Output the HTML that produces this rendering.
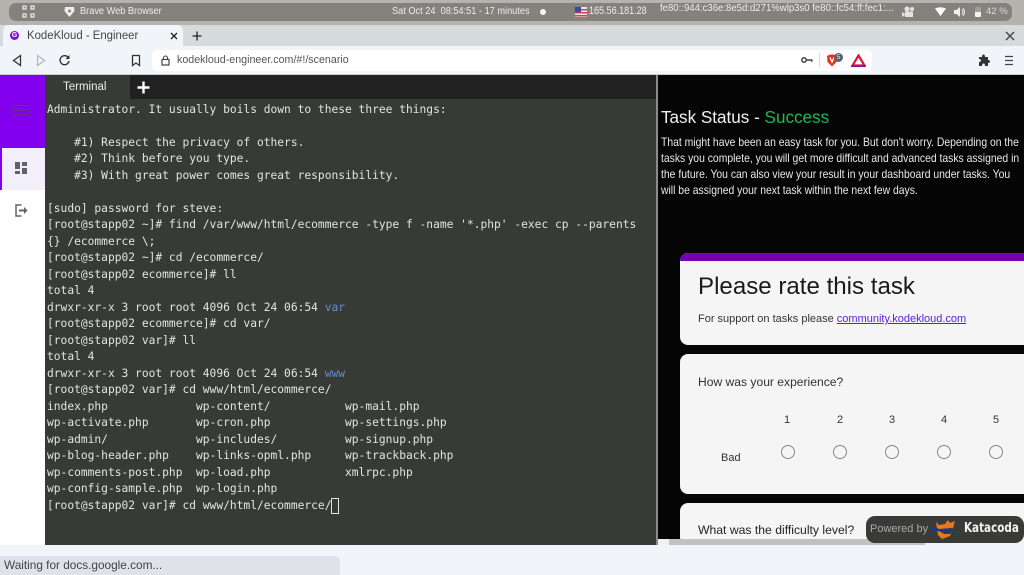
<!DOCTYPE html>
<html><head><meta charset="utf-8"><style>
html,body{margin:0;padding:0;width:1024px;height:575px;overflow:hidden;background:#f1f5f9;font-family:"Liberation Sans",sans-serif}
.a{position:absolute;white-space:pre}
#t{position:absolute;left:47px;top:101.5px;font:11.25px/16.5px "DejaVu Sans Mono",monospace;color:#e4e4df;white-space:pre}
#t b{font-weight:normal;color:#5f8fd0}
.card{position:absolute;left:680px;width:344px;background:#f5f5f5;border-radius:8px 0 0 8px}
.n{position:absolute;top:414px;font-size:11px;color:#333;width:20px;text-align:center}
.r{position:absolute;top:445px;width:12px;height:12px;border:1.5px solid #888;border-radius:50%}
.top{color:#eee;font-size:10px;transform-origin:0 0;transform:scaleX(.92)}
.rb{font-family:"Liberation Sans",sans-serif;color:#e8e8e8;font-size:11.8px;line-height:16px;transform-origin:0 0;transform:scaleX(.88)}
</style></head><body>
<!-- top bar -->
<div class="a" style="left:0;top:0;width:1024px;height:25px;background:#b5b3ae"></div>
<div class="a" style="left:9px;top:3px;width:1003px;height:18px;background:#85827e;border-radius:7px"></div>
<svg class="a" style="left:22px;top:5px" width="14" height="13"><g fill="none" stroke="#eee" stroke-width="1.2"><rect x="1" y="1" width="3" height="3"/><rect x="9" y="1" width="3" height="3"/><rect x="1" y="9" width="3" height="3"/><rect x="9" y="9" width="3" height="3"/></g></svg>
<svg class="a" style="left:64px;top:6px" width="11" height="12"><path d="M1 1h9l.5 4L5.500 11 .5 5z" fill="#eee"/><circle cx="5.500" cy="5" r="1.500" fill="#85827e"/></svg>
<div class="a top" style="left:80px;top:6px">Brave Web Browser</div>
<div class="a top" style="left:392px;top:6px">Sat Oct 24  08:54:51 - 17 minutes</div>
<div class="a" style="left:540px;top:9px;width:6px;height:6px;background:#f4f4f4;border-radius:50%"></div>
<svg class="a" style="left:575px;top:7px" width="12" height="10"><rect width="12" height="10" fill="#e8e8ee"/><rect y="2" width="12" height="1.500" fill="#d04050"/><rect y="5" width="12" height="1.500" fill="#d04050"/><rect y="8" width="12" height="1.500" fill="#d04050"/><rect width="6" height="5" fill="#3a4a9a"/></svg>
<div class="a top" style="left:589px;top:5px;font-size:11px;transform:scaleX(.82)">165.56.181.28</div>
<div class="a top" style="left:660px;top:3px;font-size:10.300px;transform:scaleX(.93)">fe80::944:c36e:8e5d:d271%wlp3s0 fe80::fc54:ff:fec1:...</div>
<svg class="a" style="left:902px;top:6px" width="13" height="12"><circle cx="5" cy="3" r="2.500" fill="#e4e4e4"/><circle cx="10" cy="3" r="2" fill="#e4e4e4"/><rect x="3" y="5.500" width="8" height="5.500" fill="#e4e4e4"/><path d="M0 6l3 2v1l-3 2z" fill="#e4e4e4"/></svg>
<svg class="a" style="left:935px;top:7px" width="11" height="10"><path d="M0 1.500Q5.500-1 11 1.500L5.500 9z" fill="#fff"/></svg>
<svg class="a" style="left:954px;top:6px" width="12" height="12"><path d="M0 4h2.500L6 1v10L2.500 8H0z" fill="#eee"/><path d="M8 3.500Q10 6 8 8.500M9 2Q12 6 9 10" stroke="#eee" stroke-width="1" fill="none"/></svg>
<div class="a" style="left:975px;top:7px;width:6px;height:10px;background:#f2f2f2;border-radius:1px"></div>
<div class="a" style="left:975px;top:7px;width:6px;height:5px;background:#a09e9a"></div>
<div class="a top" style="left:986px;top:6px;font-size:9.500px;color:#ddd;transform:none">42 %</div>
<!-- tab strip -->
<div class="a" style="left:0;top:25px;width:1024px;height:21px;background:#d5dadd"></div>
<div class="a" style="left:3px;top:25px;width:180px;height:21px;background:#f1f5f9;border-radius:6px 6px 0 0"></div>
<div class="a" style="left:10px;top:31px;width:9px;height:9px;border-radius:50%;background:#7a0fe0;color:#fff;font:bold 7px/9px 'Liberation Sans';text-align:center">G</div>
<div class="a" style="left:27px;top:27px;font-size:12.300px;color:#444;line-height:16px;transform-origin:0 0;transform:scaleX(.925)">KodeKloud - Engineer</div>
<svg class="a" style="left:170px;top:32px" width="8" height="8"><path d="M1 1l6 6M7 1L1 7" stroke="#222" stroke-width="1.300"/></svg>
<svg class="a" style="left:192px;top:31px" width="10" height="10"><path d="M5 .5v9M.5 5h9" stroke="#222" stroke-width="1.300"/></svg>
<svg class="a" style="left:1005px;top:31px" width="10" height="10"><path d="M1 1l8 8M9 1L1 9" stroke="#444" stroke-width="1.400"/></svg>
<!-- toolbar -->
<div class="a" style="left:0;top:46px;width:1024px;height:28px;background:#f1f5f9"></div>
<div class="a" style="left:0;top:74px;width:1024px;height:1px;background:#c8ccce"></div>
<svg class="a" style="left:12px;top:54px" width="10" height="13"><path d="M8.500 1.500v10L1.500 6.500z" fill="none" stroke="#333" stroke-width="1.300"/></svg>
<svg class="a" style="left:36px;top:54px" width="10" height="13"><path d="M1.500 1.500v10l7-5z" fill="none" stroke="#b5b9bc" stroke-width="1.300"/></svg>
<svg class="a" style="left:58px;top:54px" width="13" height="13"><path d="M10.500 4A4.500 4.500 0 1 0 11 7" fill="none" stroke="#333" stroke-width="1.400"/><path d="M11.500 1v4h-4z" fill="#333"/></svg>
<svg class="a" style="left:131px;top:54px" width="10" height="13"><path d="M1.500 1.500h7v10L5 9l-3.500 2.500z" fill="none" stroke="#333" stroke-width="1.300"/></svg>
<div class="a" style="left:152px;top:50px;width:208px;height:21px;background:#fff;border-radius:6px 0 0 6px"></div>
<div class="a" style="left:360px;top:50px;width:512px;height:21px;background:#fff;border-radius:0 6px 6px 0"></div>
<svg class="a" style="left:161px;top:55px" width="9" height="11"><rect x="1" y="4.500" width="7" height="5.500" fill="none" stroke="#444" stroke-width="1.200"/><path d="M2.500 4.500V3a2 2 0 0 1 4 0v1.500" fill="none" stroke="#444" stroke-width="1.100"/></svg>
<div class="a" style="left:177px;top:53px;font-size:10.700px;line-height:15px;color:#555">kodekloud-engineer.com/#!/scenario</div>
<svg class="a" style="left:801px;top:56px" width="12" height="9"><circle cx="3" cy="4" r="2.200" fill="none" stroke="#444" stroke-width="1.500"/><path d="M5 3.300h6.500v2.500H10V4.700H5z" fill="#444"/></svg>
<div class="a" style="left:819px;top:53px;width:1px;height:14px;background:#d4d8da"></div>
<svg class="a" style="left:826px;top:54px" width="12" height="13"><path d="M1 2l3-1.500h4L11 2l-.5 6L6 12.500 1.500 8z" fill="#e8331c"/><path d="M4 3.500L6 8l2-4.500" stroke="#fff" stroke-width="1.300" fill="none"/></svg>
<div class="a" style="left:834px;top:53px;width:9px;height:9px;background:#5c6068;border-radius:50%;color:#eee;font:6.500px/9px 'Liberation Sans';text-align:center">5</div>
<svg class="a" style="left:851px;top:54px" width="15" height="13"><path d="M7.500 1.500L13.500 11.500H1.500z" fill="none" stroke="#d8163c" stroke-width="2.200"/><path d="M0 11.500H15V13H0z" fill="#7a1a9a"/></svg>
<svg class="a" style="left:978px;top:54px" width="12" height="12"><path d="M1 3h3Q4 .5 5.500 .5T7 3h3v3Q12 6 12 7.500T10 9v3H7Q7 9.500 5.500 9.500T4 12H1V8Q3 8 3 6.500T1 5z" fill="#333"/></svg>
<svg class="a" style="left:1004px;top:55px" width="10" height="11"><path d="M1 1.500h8M1 5.500h8M1 9.500h8" stroke="#444" stroke-width="1.200"/></svg>
<!-- left sidebar -->
<div class="a" style="left:0;top:75px;width:45px;height:470px;background:#fff"></div>
<div class="a" style="left:0;top:75px;width:45px;height:73px;background:#8200ee"></div>
<svg class="a" style="left:11px;top:104px" width="19" height="14"><path d="M1 1.500h17M1 6h17M1 11h17" stroke="#5a3e6c" stroke-width="1.200"/></svg>
<div class="a" style="left:0;top:148px;width:2px;height:42px;background:#8200ee"></div>
<div class="a" style="left:2px;top:148px;width:43px;height:42px;background:#f2eefa"></div>
<svg class="a" style="left:15px;top:162px" width="12" height="12"><path d="M0 0h5v7H0zM7 0h5v4H7zM7 6h5v6H7zM0 9h5v3H0z" fill="#5f6368"/></svg>
<svg class="a" style="left:15px;top:204px" width="13" height="13"><path d="M6.500 1H1v11h5.500" fill="none" stroke="#5f6368" stroke-width="1.500"/><path d="M4 5.500h5V3l3.500 3.500L9 10V7.500H4z" fill="#5f6368"/></svg>
<!-- terminal -->
<div class="a" style="left:45px;top:75px;width:612px;height:470px;background:#383a35"></div>
<div class="a" style="left:45px;top:75px;width:612px;height:24px;background:#212121"></div>
<div class="a" style="left:45px;top:75px;width:85px;height:24px;background:#383a35"></div>
<div class="a" style="left:63px;top:80px;font-size:11.500px;line-height:15px;color:#eee">Terminal</div>
<svg class="a" style="left:137px;top:81px" width="13" height="13"><path d="M6.500 .5v12M.5 6.500h12" stroke="#fff" stroke-width="2.400"/></svg>
<div id="t">Administrator. It usually boils down to these three things:

    #1) Respect the privacy of others.
    #2) Think before you type.
    #3) With great power comes great responsibility.

[sudo] password for steve:
[root@stapp02 ~]# find /var/www/html/ecommerce -type f -name '*.php' -exec cp --parents
{} /ecommerce \;
[root@stapp02 ~]# cd /ecommerce/
[root@stapp02 ecommerce]# ll
total 4
drwxr-xr-x 3 root root 4096 Oct 24 06:54 <b>var</b>
[root@stapp02 ecommerce]# cd var/
[root@stapp02 var]# ll
total 4
drwxr-xr-x 3 root root 4096 Oct 24 06:54 <b>www</b>
[root@stapp02 var]# cd www/html/ecommerce/
index.php             wp-content/           wp-mail.php
wp-activate.php       wp-cron.php           wp-settings.php
wp-admin/             wp-includes/          wp-signup.php
wp-blog-header.php    wp-links-opml.php     wp-trackback.php
wp-comments-post.php  wp-load.php           xmlrpc.php
wp-config-sample.php  wp-login.php
[root@stapp02 var]# cd www/html/ecommerce/</div>
<div class="a" style="left:331px;top:498px;width:6px;height:14px;border:1px solid #e4e4df"></div>
<!-- right -->
<div class="a" style="left:656px;top:75px;width:2px;height:470px;background:#8a8c88"></div>
<div class="a" style="left:658px;top:75px;width:366px;height:470px;background:#050505"></div>
<div class="a" style="left:661px;top:108px;font-size:17.100px;line-height:20px;color:#f0f0f0">Task Status - <span style="color:#1db954">Success</span></div>
<div class="a rb" style="left:661px;top:134px">That might have been an easy task for you. But don't worry. Depending on the</div>
<div class="a rb" style="left:661px;top:150px">tasks you complete, you will get more difficult and advanced tasks assigned in</div>
<div class="a rb" style="left:661px;top:166px">the future. You can also view your result in your dashboard under tasks. You</div>
<div class="a rb" style="left:661px;top:182px">will be assigned your next task within the next few days.</div>
<div class="card" style="top:253px;height:92px;overflow:hidden"><div style="height:8px;background:#7500ae"></div></div>
<div class="a" style="left:698px;top:272px;font-size:24.100px;line-height:29px;color:#1a1a1a">Please rate this task</div>
<div class="a" style="left:698px;top:312px;font-size:11px;line-height:15px;color:#333">For support on tasks please <span style="color:#5a1fe0;text-decoration:underline">community.kodekloud.com</span></div>
<div class="card" style="top:354px;height:140px"></div>
<div class="a" style="left:698px;top:375px;font-size:12.100px;line-height:15px;color:#333">How was your experience?</div>
<div class="n" style="left:777px">1</div><div class="n" style="left:830px">2</div><div class="n" style="left:882px">3</div><div class="n" style="left:934px">4</div><div class="n" style="left:986px">5</div>
<div class="a" style="left:721px;top:452px;font-size:11px;line-height:13px;color:#333">Bad</div>
<div class="r" style="left:781px"></div><div class="r" style="left:833px"></div><div class="r" style="left:885px"></div><div class="r" style="left:937px"></div><div class="r" style="left:989px"></div>
<div class="card" style="top:503px;height:42px"></div>
<div class="a" style="left:698px;top:522px;font-size:12.200px;line-height:16px;color:#222">What was the difficulty level?</div>
<!-- scrollbars -->
<div class="a" style="left:658px;top:539px;width:366px;height:6px;background:#f1f1f1"></div>
<div class="a" style="left:669px;top:539px;width:256px;height:6px;background:#c1c1c1"></div>
<!-- katacoda badge -->
<div class="a" style="left:866px;top:516px;width:158px;height:27px;background:#3a3a38;border-radius:9px"></div>
<div class="a" style="left:870px;top:522px;font-size:11px;line-height:14px;color:#a8a8a8">Powered by</div>
<svg class="a" style="left:930px;top:518px" width="30" height="22"><path d="M6 4l3 3 6-1 3-4 2 3 5-2-2 7-3 8-8 3-4-4z" fill="#e8781e"/><path d="M1 10q4-2 8 1l12-1 3 1-4 5-6 0-5-3-7 1z" fill="#1c3c78"/></svg>
<div class="a" style="left:964px;top:521px;font:bold 13px/16px 'DejaVu Sans',sans-serif;color:#f2f2f2;transform-origin:0 0;transform:scaleX(.8)">Katacoda</div>
<!-- status -->
<div class="a" style="left:0;top:556px;width:340px;height:19px;background:#dfe2e8;border-radius:0 5px 0 0"></div>
<div class="a" style="left:4px;top:558px;font-size:11.800px;line-height:15px;color:#444">Waiting for docs.google.com...</div>
</body></html>
